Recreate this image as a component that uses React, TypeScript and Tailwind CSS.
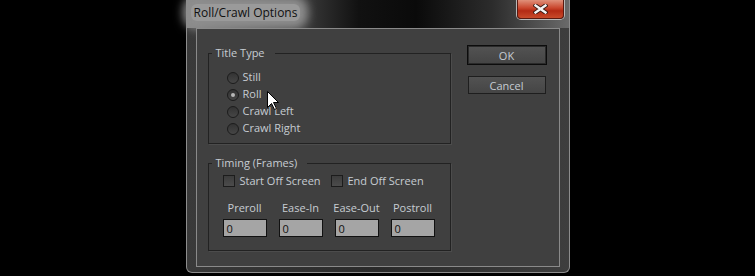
import React, { useState } from "react";

const font = { fontFamily: '"Open Sans", "Liberation Sans", sans-serif' };

const Radio = ({ label, checked, onClick }: { label: string; checked: boolean; onClick: () => void }) => (
  <button onClick={onClick} className="flex h-[17px] items-center gap-[4px] text-left">
    <span className="flex h-[12px] w-[12px] items-center justify-center rounded-full border border-[#1c1c1c] bg-[linear-gradient(180deg,#333_0%,#464646_100%)]">
      {checked && <span className="h-[4px] w-[4px] rounded-full bg-[#b8b8b8]" />}
    </span>
    <span>{label}</span>
  </button>
);

const Check = ({ label }: { label: string }) => {
  const [on, setOn] = useState(false);
  return (
    <button onClick={() => setOn(!on)} className="flex h-[16px] items-center gap-[5px]">
      <span className="flex h-[12px] w-[12px] items-center justify-center border border-[#1c1c1c] bg-[linear-gradient(180deg,#3c3c3c_0%,#4c4c4c_100%)] text-[10px] leading-none">
        {on ? "✓" : ""}
      </span>
      <span>{label}</span>
    </button>
  );
};

const NumField = ({ label }: { label: string }) => (
  <div className="flex w-[44px] flex-col items-center">
    <span className="h-[14px] whitespace-nowrap leading-[14px]">{label}</span>
    <div className="mt-[4px] flex h-[18px] w-[44px] items-center border border-[#111] bg-[#a5a5a5] px-[3px] text-[11px] leading-none text-[#121212]">
      0
    </div>
  </div>
);

export default function App() {
  const [titleType, setTitleType] = useState("roll");
  const types = [
    ["still", "Still"],
    ["roll", "Roll"],
    ["left", "Crawl Left"],
    ["right", "Crawl Right"],
  ];

  return (
    <div className="flex h-[276px] w-full justify-center bg-black" style={font}>
      <div className="relative flex h-[273px] w-[384px] flex-col rounded-b-[6px] border-x border-b border-[#8d8d8d] bg-[linear-gradient(90deg,#3a3a3a_0%,#2a2a2a_50%,#3e3e3e_100%)]">
        {/* title bar */}
        <div className="flex h-[28px] items-start justify-between bg-[linear-gradient(90deg,#8a8a8a_0%,#4a4a4a_25%,#111_45%,#0a0a0a_60%,#2c2c2c_80%,#6a6a6a_100%)]">
          <span className="ml-[4px] mt-[4px] rounded-[6px] bg-[#9a9a9a] px-[3px] text-[12px] leading-[17px] text-[#101010] shadow-[0_0_10px_8px_#8e8e8e]">
            Roll/Crawl Options
          </span>
          <button className="mr-[5px] flex h-[19px] w-[47px] items-center justify-center rounded-b-[4px] border border-t-0 border-[#5a1a10] bg-[linear-gradient(180deg,#e0907a_0%,#c9452c_45%,#b32a14_60%,#c84a2a_100%)] shadow-[0_0_0_1px_#b8b8b8]">
            <svg width="15" height="10" viewBox="0 0 15 10">
              <path d="M2.5 1.5 L12.5 8.5 M12.5 1.5 L2.5 8.5" stroke="#3a1a14" strokeWidth="4.2" strokeLinecap="square" />
              <path d="M2.5 1.5 L12.5 8.5 M12.5 1.5 L2.5 8.5" stroke="#f4f4f4" strokeWidth="2.4" strokeLinecap="square" />
            </svg>
          </button>
        </div>

        {/* client area */}
        <div className="mx-[9px] flex h-[239px] border border-[#8a8a8a] bg-[#404040] pl-[11px] pt-[17px] text-[11px] text-[#c6ccd2]">
          <div className="flex w-[243px] flex-col gap-[12px]">
            <fieldset className="h-[98px] border border-[#222] p-0 shadow-[1px_1px_0_#4c4c4c]">
              <legend className="ml-[3px] pl-[4px] pr-[10px] leading-[14px]">Title Type</legend>
              <div className="flex flex-col pl-[18px] pt-[9px]">
                {types.map(([k, l]) => (
                  <Radio key={k} label={l} checked={titleType === k} onClick={() => setTitleType(k)} />
                ))}
              </div>
            </fieldset>

            <fieldset className="h-[95px] border border-[#222] p-0 shadow-[1px_1px_0_#4c4c4c]">
              <legend className="ml-[3px] pl-[4px] pr-[10px] leading-[14px]">Timing (Frames)</legend>
              <div className="flex flex-col pl-[14px] pt-[3px]">
                <div className="flex">
                  <div className="w-[108px]">
                    <Check label="Start Off Screen" />
                  </div>
                  <Check label="End Off Screen" />
                </div>
                <div className="mt-[12px] flex gap-[12px]">
                  <NumField label="Preroll" />
                  <NumField label="Ease-In" />
                  <NumField label="Ease-Out" />
                  <NumField label="Postroll" />
                </div>
              </div>
            </fieldset>
          </div>

          <div className="ml-[16px] mt-[-1px] flex w-[80px] flex-col items-center gap-[11px]">
            <button className="h-[20px] w-[80px] border border-[#0c0c0c] bg-[#0c0c0c] p-0">
              <span className="flex h-full w-full items-center justify-center border border-[#2a2a2a] bg-[linear-gradient(180deg,#525252_0%,#454545_100%)] leading-none">
                OK
              </span>
            </button>
            <button className="flex h-[18px] w-[78px] items-center justify-center border border-[#1e1e1e] bg-[linear-gradient(180deg,#525252_0%,#454545_100%)] leading-none">
              Cancel
            </button>
          </div>
        </div>

        {/* mouse pointer */}
        <svg className="pointer-events-none absolute left-[80px] top-[91px]" width="13" height="20" viewBox="0 0 13 20">
          <path d="M0.5 0.5 L0.5 16.5 L4.5 12.5 L7.5 18.5 L9.5 17.5 L6.5 11.5 L11.5 11.5 Z" fill="#fff" stroke="#000" strokeWidth="1" />
        </svg>
      </div>
    </div>
  );
}
